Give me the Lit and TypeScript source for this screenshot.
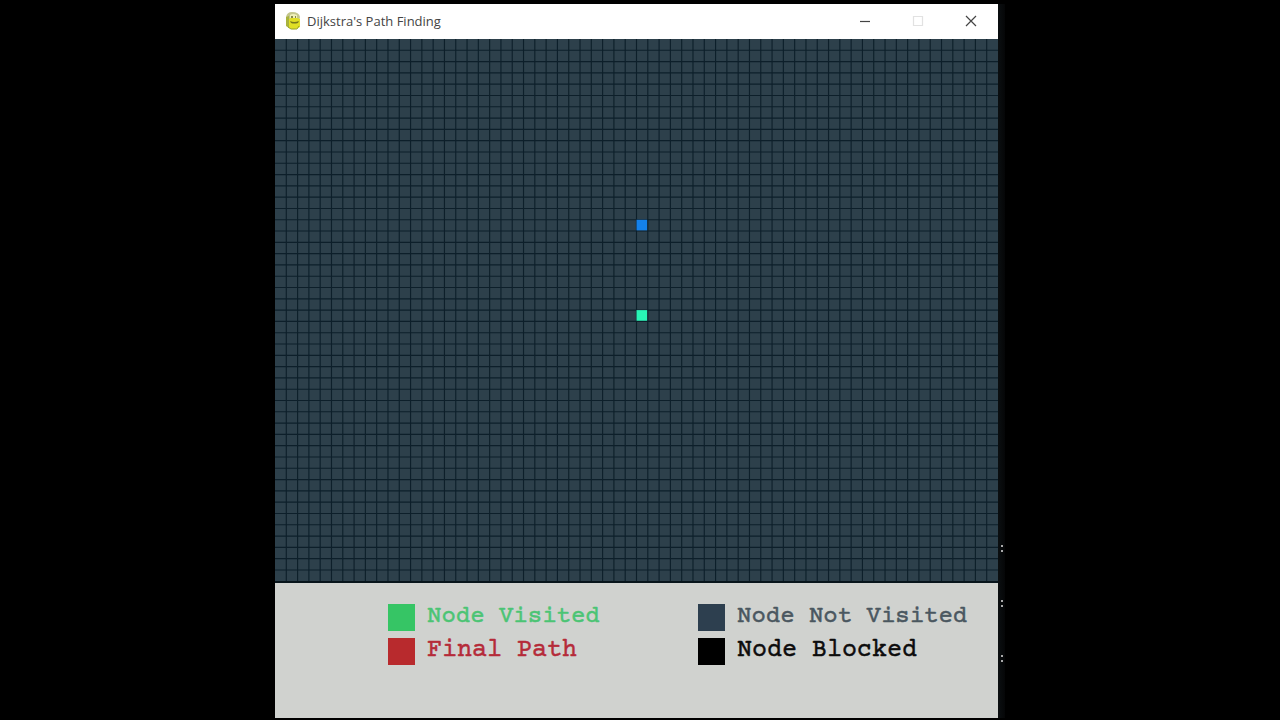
import { LitElement, html, svg, css } from "lit";
import { customElement, property } from "lit/decorators.js";

const COLS = 64;
const ROWS = 48;
const CELL = 10;

const range = (n: number) => Array.from({ length: n }, (_, i) => i + 1);

@customElement("path-grid")
class PathGrid extends LitElement {
  @property({ attribute: false }) start = { col: 32, row: 16 };
  @property({ attribute: false }) goal = { col: 32, row: 24 };

  static styles = css`
    :host {
      display: block;
      background: #2d404b;
      border-bottom: 2px solid #07141b;
    }
    .board {
      display: block;
      width: 100%;
      height: auto;
    }
    .line {
      stroke: #0d1f2a;
      stroke-width: 1;
    }
    .start {
      fill: #1481ea;
    }
    .goal {
      fill: #29f5b5;
    }
  `;

  private cell(node: { col: number; row: number }, kind: string) {
    return svg`<rect class=${kind} x=${node.col * CELL} y=${node.row * CELL} width="9.4" height="9.4"></rect>`;
  }

  render() {
    return html`
      <svg class="board" viewBox="0 0 ${COLS * CELL} ${ROWS * CELL}" role="img" aria-label="Node grid">
        ${range(COLS - 1).map((c) => svg`<line class="line" x1=${c * CELL} x2=${c * CELL} y1="0" y2=${ROWS * CELL}></line>`)}
        ${range(ROWS - 1).map((r) => svg`<line class="line" y1=${r * CELL} y2=${r * CELL} x1="0" x2=${COLS * CELL}></line>`)}
        ${this.cell(this.start, "start")} ${this.cell(this.goal, "goal")}
      </svg>
    `;
  }
}

@customElement("app-root")
class AppRoot extends LitElement {
  static styles = css`
    :host {
      display: grid;
      grid-template-columns: 275fr 723fr 282fr;
      align-items: stretch;
      min-height: 100vh;
      box-sizing: border-box;
      padding: 4px 0 2px;
      background: #000;
    }
    .window {
      grid-column: 2;
      display: flex;
      flex-direction: column;
      background: #d0d2cf;
    }
    .titlebar {
      display: flex;
      align-items: center;
      box-sizing: border-box;
      height: 35px;
      padding: 0 1px 1px 9px;
      background: #fff;
    }
    .logo {
      width: 18px;
      height: 20px;
    }
    .title {
      flex: 1;
      margin: 0 0 0 5px;
      font: 400 13px/20px "Open Sans", "Noto Sans", sans-serif;
      color: #444;
    }
    .control {
      display: grid;
      place-items: center;
      width: 53px;
      height: 34px;
      padding: 0;
      border: 0;
      background: none;
      color: #444;
    }
    .control:disabled {
      color: #e2e2e2;
    }
    .glyph {
      width: 14px;
      height: 14px;
      fill: none;
      stroke: currentColor;
      stroke-width: 1.2;
    }
    .legend {
      flex: 1;
      display: grid;
      grid-template-columns: 310fr 300fr;
      align-content: start;
      row-gap: 7px;
      margin: 0;
      padding: 21px 0 52px 113px;
      list-style: none;
    }
    .entry {
      display: flex;
      align-items: flex-start;
      gap: 12px;
      height: 27px;
      white-space: nowrap;
      font: 400 24px/26px "Courier Prime", "Liberation Mono", monospace;
      -webkit-text-stroke: 0.5px currentColor;
    }
    .strong {
      font-size: 25px;
    }
    .swatch {
      width: 27px;
      height: 27px;
      background: var(--fill);
    }
    .visited {
      --fill: #36c565;
      color: #4bc474;
    }
    .unvisited {
      --fill: #2d3f4f;
      color: #4a5760;
    }
    .path {
      --fill: #b82a2d;
      color: #b52b39;
    }
    .blocked {
      --fill: #000;
      color: #0c0c0c;
    }
    .edge {
      display: flex;
      flex-direction: column;
      justify-content: flex-end;
      gap: 48px;
      width: 7px;
      box-sizing: border-box;
      padding: 0 0 56px 3px;
      background: linear-gradient(90deg, #0b0f11, #050607);
    }
    .grip {
      width: 2px;
      height: 7px;
      fill: #aaa;
    }
  `;

  render() {
    return html`
      <main class="window">
        <header class="titlebar">
          <svg class="logo" viewBox="0 0 18 20" aria-hidden="true">
            <path d="M2 6 Q3 1 8 1 Q15 1 16 6 L15 10 L3 10Z" fill="#c3c68c" />
            <path d="M2 6 L5 5 L5 17 L2 15Z" fill="#a9b33e" />
            <path d="M5 8 Q10 5 16 8 L16 16 Q10 20 5 17Z" fill="#e0df25" />
            <path d="M6 10 Q10 12 15 10 L14 12 Q10 13 7 12Z" fill="#77791c" />
            <path d="M6 4 Q9 2 13 4 L13 7 L6 7Z" fill="#eff0ba" />
            <path d="M7 5h2v2h-2zM11 5h1v2h-1z" fill="#85884a" />
            <path d="M4 16 L7 18 L13 18 L15 15" fill="none" stroke="#99a32c" />
          </svg>
          <h1 class="title">Dijkstra's Path Finding</h1>
          <button class="control" aria-label="Minimize">
            <svg class="glyph" viewBox="0 0 14 14"><path d="M2 7.5H12" /></svg>
          </button>
          <button class="control" aria-label="Maximize" disabled>
            <svg class="glyph" viewBox="0 0 14 14"><path d="M2.5 2.5H11.5V11.5H2.5Z" /></svg>
          </button>
          <button class="control" aria-label="Close">
            <svg class="glyph" viewBox="0 0 14 14"><path d="M2 2L12 12M12 2L2 12" /></svg>
          </button>
        </header>
        <path-grid></path-grid>
        <ul class="legend">
          <li class="entry visited"><span class="swatch"></span>Node Visited</li>
          <li class="entry unvisited"><span class="swatch"></span>Node Not Visited</li>
          <li class="entry strong path"><span class="swatch"></span>Final Path</li>
          <li class="entry strong blocked"><span class="swatch"></span>Node Blocked</li>
        </ul>
      </main>
      <aside class="edge" aria-hidden="true">
        ${[0, 1, 2].map(
          () => html`<svg class="grip" viewBox="0 0 2 7"><path d="M0 0h2v2h-2zM0 5h2v2h-2z" /></svg>`
        )}
      </aside>
    `;
  }
}
